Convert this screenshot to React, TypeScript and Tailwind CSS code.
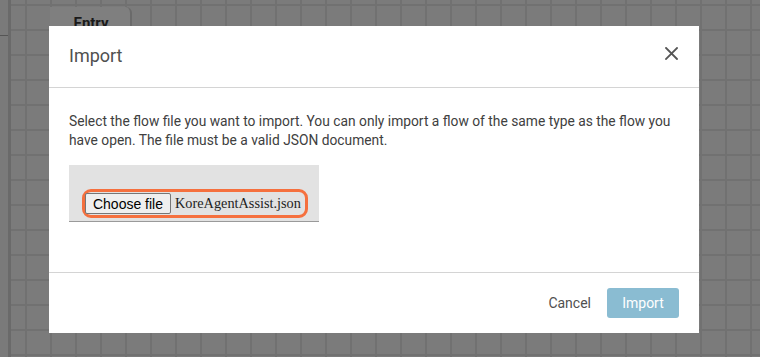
import React from 'react';

const CloseIcon: React.FC = () => (
    <svg width="13" height="13" viewBox="0 0 13 13" fill="none">
        <path d="M1 1L12 12M12 1L1 12" stroke="#555555" strokeWidth="1.8" strokeLinecap="square" />
    </svg>
);

export default function App() {
    return (
        <div className="relative w-[760px] h-[357px] overflow-hidden flex font-['Roboto',sans-serif]">
            {/* left sidebar edge */}
            <div className="w-[8px] h-full bg-[#7a7a7a] flex flex-col">
                <div className="h-[35px]" />
                <div className="h-[1px] bg-[#555555]" />
            </div>
            <div className="w-[3px] h-full bg-[#6a6a6a]" />

            {/* flow canvas */}
            <div className="relative flex-1 h-full bg-[#7b7b7b] [background-image:linear-gradient(to_right,#717171_2px,transparent_2px),linear-gradient(to_bottom,#717171_2px,transparent_2px)] [background-size:25px_25px] [background-position:14px_4px]">
                <div className="absolute left-[39px] top-[7px] w-[82px] h-[40px] bg-[#7f7f7f] border-r-2 border-[#6a6a6a] rounded-tr-[6px] flex justify-center pt-[7px]">
                    <span className="text-[15px] font-bold text-[#1a1a1a] leading-[18px] pl-[2px]">Entry</span>
                </div>
            </div>

            {/* modal */}
            <div className="absolute left-[49px] top-[26px] w-[650px] h-[307px] bg-white flex flex-col">
                <div className="h-[62px] flex items-center justify-between px-5 border-b border-[#d4d4d4]">
                    <h2 className="text-[18px] text-[#505050] leading-none pb-[2px]">Import</h2>
                    <button className="mr-[1px] mb-[6px]">
                        <CloseIcon />
                    </button>
                </div>
                <div className="h-[184px] px-5 pt-[24px]">
                    <p className="text-[13.8px] leading-[18.5px] text-[#404040]">
                        Select the flow file you want to import. You can only import a flow of the same type as the flow you have open. The file must be a valid JSON document.
                    </p>
                    <div className="mt-[16px] w-[250px] h-[57px] bg-[#e2e2e2] border-b border-[#9a9a9a] flex items-end pl-[13px] pb-[3px]">
                        <div className="w-[226px] h-[29px] border-[3px] border-[#f5703e] rounded-[9px] flex items-center">
                            <span className="h-[21px] w-[86px] bg-[#efefef] border border-[#767676] rounded-[2px] flex items-center justify-center font-['Liberation_Sans',sans-serif] text-[14px] text-black leading-none">
                                Choose file
                            </span>
                            <span className="ml-[4px] font-['Liberation_Serif',serif] text-[14.3px] text-[#222222] leading-none">
                                KoreAgentAssist.json
                            </span>
                        </div>
                    </div>
                </div>
                <div className="flex-1 border-t border-[#d4d4d4] flex items-center justify-end px-5 gap-4">
                    <button className="text-[14px] text-[#505050]">Cancel</button>
                    <button className="w-[72px] h-[30px] rounded-[3px] bg-[#8abcd2] text-white text-[14px]">Import</button>
                </div>
            </div>
        </div>
    );
}
